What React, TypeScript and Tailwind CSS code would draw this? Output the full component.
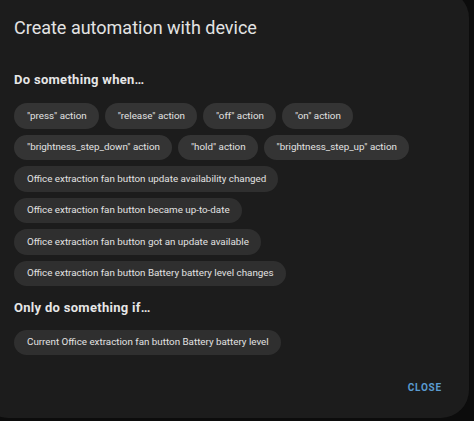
import React from 'react';

const triggers = [
  '"press" action',
  '"release" action',
  '"off" action',
  '"on" action',
  '"brightness_step_down" action',
  '"hold" action',
  '"brightness_step_up" action',
];

const events = [
  'Office extraction fan button update availability changed',
  'Office extraction fan button became up-to-date',
  'Office extraction fan button got an update available',
  'Office extraction fan button Battery battery level changes',
];

const conditions = ['Current Office extraction fan button Battery battery level'];

function Chip({ label, light }: { label: string; light?: boolean }) {
  return (
    <button
      className={`h-[25.5px] pl-[13px] pr-[12px] rounded-full text-[9.8px] leading-none text-[#e2e2e2] whitespace-nowrap ${
        light ? 'bg-[#343434]' : 'bg-[#2f2f2f]'
      }`}
    >
      {label}
    </button>
  );
}

export default function App() {
  return (
    <div
      className="w-[474px] h-[421px] bg-[#0c0c0c] overflow-hidden"
      style={{ fontFamily: 'Roboto, "Liberation Sans", sans-serif' }}
    >
      {/* Dialog surface */}
      <div className="-mt-[10px] -ml-[20px] w-[489px] h-[428px] rounded-[28px] bg-[#1c1c1c] pt-[26px] pl-[34px] pr-[26px] flex flex-col">
        <h2 className="text-[18px] leading-[24px] text-[#e3e3e3]">Create automation with device</h2>

        <h3 className="mt-[30px] text-[13px] leading-[20px] font-bold tracking-[0.3px] text-[#e6e6e6]">Do something when…</h3>
        <div className="mt-[13px] flex flex-wrap gap-x-[6px] gap-y-[6px] w-[420px]">
          {triggers.map((t) => (
            <Chip key={t} label={t} light />
          ))}
        </div>
        <div className="mt-[6px] flex flex-col items-start gap-[6px]">
          {events.map((t) => (
            <Chip key={t} label={t} />
          ))}
        </div>

        <h3 className="mt-[11.5px] text-[13px] leading-[20px] font-bold tracking-[0.3px] text-[#e6e6e6]">Only do something if…</h3>
        <div className="mt-[12px] flex flex-col items-start gap-[6px]">
          {conditions.map((t) => (
            <Chip key={t} label={t} />
          ))}
        </div>

        <div className="mt-auto mb-[23px] flex justify-end">
          <button className="mr-[1px] text-[10px] leading-[14px] font-bold tracking-[0.8px] text-[#5a9bd0]">CLOSE</button>
        </div>
      </div>
    </div>
  );
}
